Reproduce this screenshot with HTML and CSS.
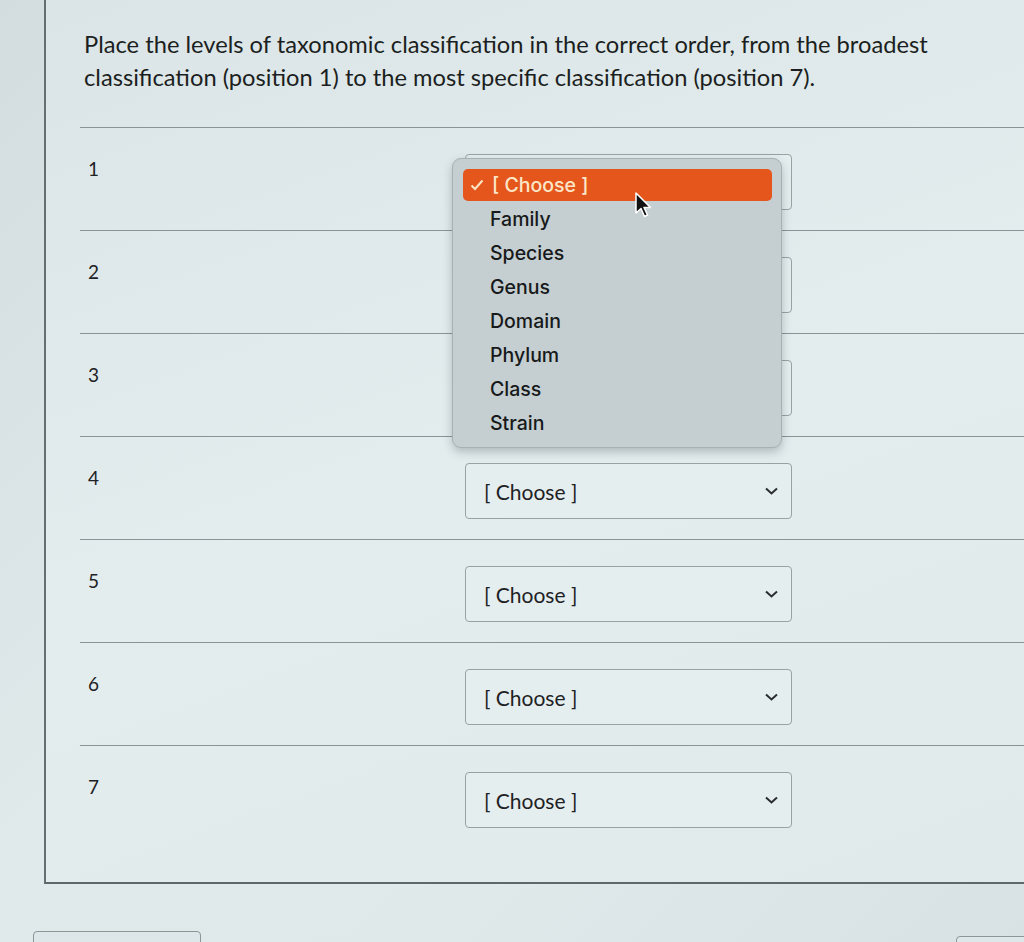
FILE: index.html
```html
<!DOCTYPE html>
<html lang="en">
<head>
  <meta charset="UTF-8">
  <title>Quiz question</title>
  <link rel="stylesheet" href="styles.css">
</head>
<body>
<div class="panel">
  <p class="question">Place the levels of taxonomic classification in the correct order, from the broadest classification (position 1) to the most specific classification (position 7).</p>

  <div class="answers">
    <div class="row"><span class="num">1</span><div class="select"><span>[ Choose ]</span><svg class="chev" width="13" height="8" viewBox="0 0 13 8"><polyline points="1,1.5 6.5,6.5 12,1.5"/></svg></div></div>
    <div class="row"><span class="num">2</span><div class="select"><span>[ Choose ]</span><svg class="chev" width="13" height="8" viewBox="0 0 13 8"><polyline points="1,1.5 6.5,6.5 12,1.5"/></svg></div></div>
    <div class="row"><span class="num">3</span><div class="select"><span>[ Choose ]</span><svg class="chev" width="13" height="8" viewBox="0 0 13 8"><polyline points="1,1.5 6.5,6.5 12,1.5"/></svg></div></div>
    <div class="row"><span class="num">4</span><div class="select"><span>[ Choose ]</span><svg class="chev" width="13" height="8" viewBox="0 0 13 8"><polyline points="1,1.5 6.5,6.5 12,1.5"/></svg></div></div>
    <div class="row"><span class="num">5</span><div class="select"><span>[ Choose ]</span><svg class="chev" width="13" height="8" viewBox="0 0 13 8"><polyline points="1,1.5 6.5,6.5 12,1.5"/></svg></div></div>
    <div class="row"><span class="num">6</span><div class="select"><span>[ Choose ]</span><svg class="chev" width="13" height="8" viewBox="0 0 13 8"><polyline points="1,1.5 6.5,6.5 12,1.5"/></svg></div></div>
    <div class="row last"><span class="num">7</span><div class="select"><span>[ Choose ]</span><svg class="chev" width="13" height="8" viewBox="0 0 13 8"><polyline points="1,1.5 6.5,6.5 12,1.5"/></svg></div></div>
  </div>
</div>

<div class="footer">
  <div class="btn"></div>
  <div class="btn right"></div>
</div>

<!-- open option list of the first select -->
<ul class="menu">
  <li class="active"><svg class="tick" width="14" height="12" viewBox="0 0 14 12"><polyline points="1.5,6.5 5,10 12.5,1.5"/></svg>[ Choose ]</li>
  <li>Family</li>
  <li>Species</li>
  <li>Genus</li>
  <li>Domain</li>
  <li>Phylum</li>
  <li>Class</li>
  <li>Strain</li>
</ul>

<svg class="cursor" width="20" height="28" viewBox="0 0 20 28">
  <path d="M2 1 L2 21 L7 16.5 L10.5 24.5 L13.5 23 L10 15.5 L16.5 15.5 Z" fill="#111" stroke="#fff" stroke-width="1.5" stroke-linejoin="round"/>
</svg>
</body>
</html>
```

FILE: styles.css
```css
html, body {margin: 0; padding: 0;}
body {
  width: 1024px;
  height: 942px;
  overflow: hidden;
  position: relative;
  background: linear-gradient(135deg, #d3dddf 0%, #e0eaeb 45%, #dfe9ea 70%, #d8e2e4 100%);
  font-family: Lato, "Open Sans", sans-serif;
  color: #1f2224;
}

.panel {
  margin-left: 44px;
  border-left: 2px solid #666e71;
  border-bottom: 2px solid #5f676a;
  background: linear-gradient(160deg, #dbe5e7 0%, #e3edee 50%, #e0eaeb 100%);
}

.question {
  margin: 0;
  max-width: 880px;
  padding: 28px 0 0 38px;
  font-size: 23.7px;
  line-height: 33px;
  color: #1c1f21;
}

.answers {margin: 33px 0 0 34px;}

.row {
  box-sizing: border-box;
  height: 103px;
  border-top: 1.5px solid #8a9395;
  display: grid;
  grid-template-columns: 385px 327px;
  align-items: start;
}
.row.last {height: 137px;}

.num {
  padding: 30px 0 0 8px;
  font-size: 19px;
  line-height: 22px;
}

.select {
  box-sizing: border-box;
  margin-top: 26px;
  height: 56px;
  border: 1.5px solid #99a1a3;
  border-radius: 4px;
  background: #e4eeef;
  display: flex;
  align-items: center;
  justify-content: space-between;
  padding: 0 13px 0 18px;
  font-size: 21px;
}
.chev polyline {fill: none; stroke: #2a2d2f; stroke-width: 2;}

.footer {
  display: flex;
  justify-content: space-between;
  padding: 47px 0 0 33px;
}
.btn {
  width: 166px;
  height: 30px;
  border: 1.5px solid #8d9597;
  border-radius: 4px;
  background: #dde6e8;
}
.btn.right {width: 70px; margin-top: 5px; margin-right: -4px;}

/* dropdown list */
.menu {
  position: absolute;
  left: 452px;
  top: 158px;
  width: 330px;
  box-sizing: border-box;
  margin: 0;
  padding: 9px 9px 7px 10px;
  list-style: none;
  background: #c5cfd1;
  border: 1px solid #a7b0b2;
  border-radius: 9px;
  box-shadow: 0 4px 10px rgba(60, 70, 75, 0.3);
  font-family: Inter, "Noto Sans", sans-serif;
  font-size: 19.5px;
  font-weight: 500;
  color: #17191a;
}
.menu li {
  height: 34px;
  line-height: 34px;
  padding-left: 27px;
  position: relative;
}
.menu li.active {
  height: 32px;
  line-height: 32px;
  margin: 1px 0;
  background: #e5561d;
  border-radius: 5px;
  color: #fbe6c8;
  padding-left: 29px;
}
.tick {position: absolute; left: 7px; top: 10px;}
.tick polyline {fill: none; stroke: #fbe6c8; stroke-width: 2;}

.cursor {position: absolute; left: 634px; top: 192px;}
```
